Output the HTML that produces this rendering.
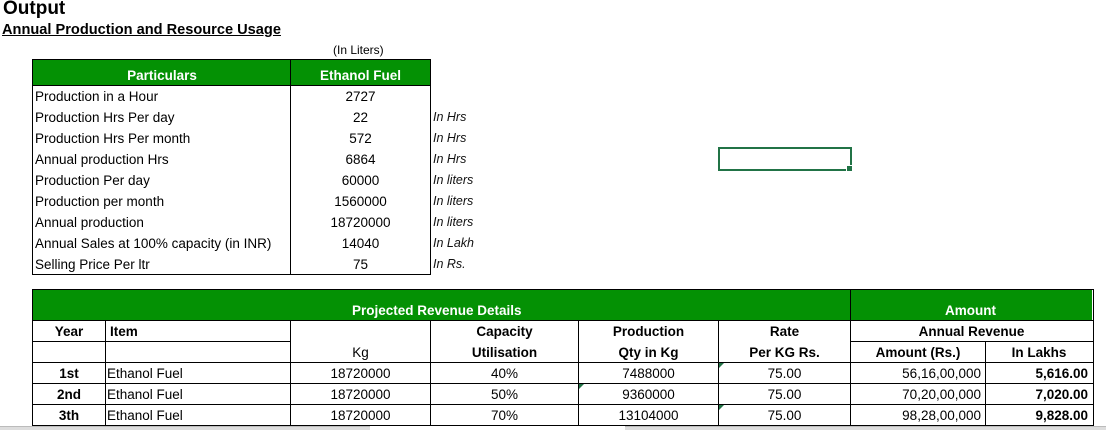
<!DOCTYPE html><html><head><style>
body{margin:0;width:1106px;height:429px;background:#fff;position:relative;overflow:hidden;font-family:"Liberation Sans",sans-serif;color:#000}
.a{position:absolute;white-space:nowrap}
.t{font-size:13.5px;line-height:21px}
.c{text-align:center}.r{text-align:right}
.b{font-weight:bold}
.g{background:#049104;color:#fff;font-weight:bold}
.hl{position:absolute;height:1px;background:#000}
.vl{position:absolute;width:1px;background:#000}
.i{font-style:italic;font-size:12.5px;color:#111}
</style></head><body>
<div class="a b" style="left:3px;top:-2px;font-size:19px">Output</div>
<div class="a b" style="left:2px;top:22px;font-size:14.6px;text-decoration:underline">Annual Production and Resource Usage</div>
<div class="a" style="left:333px;top:43px;font-size:12px">(In Liters)</div>

<div class="a g t" style="left:33px;top:60px;width:258px;height:25px;line-height:31px;text-align:center">Particulars</div>
<div class="a g t" style="left:291px;top:60px;width:139px;height:25px;line-height:31px;text-align:center">Ethanol Fuel</div>
<div class="a" style="left:32px;top:59px;width:397px;height:214px;border:1px solid #000"></div>
<div class="vl" style="left:290px;top:60px;height:214px"></div>
<div class="hl" style="left:33px;top:85px;width:397px"></div>
<div class="a t" style="left:35px;top:86px">Production in a Hour<br>Production Hrs Per day<br>Production Hrs Per month<br>Annual production Hrs<br>Production Per day<br>Production per month<br>Annual production<br>Annual Sales at 100% capacity (in INR)<br>Selling Price Per ltr</div>
<div class="a t c" style="left:291px;top:86px;width:139px">2727<br>22<br>572<br>6864<br>60000<br>1560000<br>18720000<br>14040<br>75</div>
<div class="a i" style="left:433px;top:86px;line-height:21px"><br>In Hrs<br>In Hrs<br>In Hrs<br>In liters<br>In liters<br>In liters<br>In Lakh<br>In Rs.</div>

<div class="a" style="left:718px;top:147px;width:130px;height:20px;border:2px solid #217346"></div>
<div class="a" style="left:846px;top:165px;width:5px;height:5px;background:#217346;border:1px solid #fff"></div>

<div class="a g t" style="left:33px;top:290px;width:817px;height:30px"><span class="a" style="left:319px;top:10px">Projected Revenue Details</span></div>
<div class="a g t" style="left:851px;top:290px;width:241px;height:30px"><span class="a" style="left:94px;top:10px">Amount</span></div>
<div class="a" style="left:32px;top:289px;width:1060px;height:135px;border:1px solid #000"></div>
<div class="vl" style="left:850px;top:290px;height:135px"></div>
<div class="hl" style="left:33px;top:320px;width:1060px"></div>
<div class="hl" style="left:33px;top:341px;width:258px"></div>
<div class="hl" style="left:850px;top:341px;width:243px"></div>
<div class="hl" style="left:33px;top:362px;width:1060px"></div>
<div class="hl" style="left:33px;top:383px;width:1060px"></div>
<div class="hl" style="left:33px;top:404px;width:1060px"></div>
<div class="vl" style="left:105px;top:320px;height:105px"></div>
<div class="vl" style="left:290px;top:320px;height:105px"></div>
<div class="vl" style="left:430px;top:320px;height:105px"></div>
<div class="vl" style="left:578px;top:320px;height:105px"></div>
<div class="vl" style="left:718px;top:320px;height:105px"></div>
<div class="vl" style="left:985px;top:341px;height:84px"></div>

<div class="a t c b" style="left:33px;top:321px;width:72px">Year<br><br>1st<br>2nd<br>3th</div>
<div class="a t b" style="left:110px;top:321px">Item</div>
<div class="a t" style="left:107px;top:363px">Ethanol Fuel<br>Ethanol Fuel<br>Ethanol Fuel</div>
<div class="a t c" style="left:291px;top:342px;width:139px">Kg<br>18720000<br>18720000<br>18720000</div>
<div class="a t c" style="left:431px;top:321px;width:147px"><b>Capacity<br>Utilisation</b><br>40%<br>50%<br>70%</div>
<div class="a t c" style="left:579px;top:321px;width:139px"><b>Production<br>Qty in Kg</b><br>7488000<br>9360000<br>13104000</div>
<div class="a t c" style="left:719px;top:321px;width:131px"><b>Rate<br>Per KG Rs.</b><br>75.00<br>75.00<br>75.00</div>
<div class="a t c b" style="left:851px;top:321px;width:241px">Annual Revenue</div>
<div class="a t c b" style="left:851px;top:342px;width:134px">Amount (Rs.)</div>
<div class="a t c b" style="left:986px;top:342px;width:106px">In Lakhs</div>
<div class="a t r" style="left:851px;top:363px;width:130px">56,16,00,000<br>70,20,00,000<br>98,28,00,000</div>
<div class="a t r b" style="left:986px;top:363px;width:102px">5,616.00<br>7,020.00<br>9,828.00</div>
<div class="a" style="left:719px;top:363px;width:0;height:0;border-top:5px solid #217346;border-right:5px solid transparent"></div>
<div class="a" style="left:579px;top:384px;width:0;height:0;border-top:5px solid #217346;border-right:5px solid transparent"></div>
<div class="a" style="left:719px;top:405px;width:0;height:0;border-top:5px solid #217346;border-right:5px solid transparent"></div>

<div class="a" style="left:0;top:426px;width:370px;height:3px;background:#ddd;border-top:1px solid #bbb"></div>
<div class="a" style="left:625px;top:426px;width:481px;height:3px;background:#ddd;border-top:1px solid #bbb"></div>
</body></html>
